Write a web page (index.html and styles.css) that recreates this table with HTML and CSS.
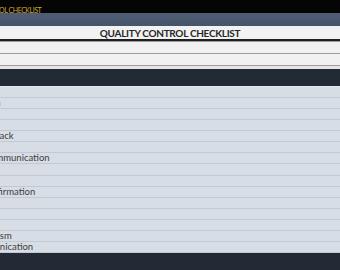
FILE: index.html
```html
<!DOCTYPE html>
<html lang="en">
<head>
    <meta charset="UTF-8">
    <meta name="viewport" content="width=device-width, initial-scale=1.0">
    <title>Quality Control Checklist</title>
    <link rel="stylesheet" href="styles.css">
</head>
<body>
    <div class="sheet">
        <div class="tab-bar">
            <span class="tab-name">QUALITY CONTROL CHECKLIST</span>
        </div>
        <div class="band"></div>

        <div class="title-row">
            <h1>QUALITY CONTROL CHECKLIST</h1>
        </div>
        <div class="info-row"></div>
        <div class="info-row"></div>
        <div class="spacer"></div>

        <div class="section-head"></div>

        <div class="items">
            <div class="item"></div>
            <div class="item">Organization</div>
            <div class="item"></div>
            <div class="item"></div>
            <div class="item">Client Feedback</div>
            <div class="item"></div>
            <div class="item">External Communication</div>
            <div class="item"></div>
            <div class="item"></div>
            <div class="item">Receipt Confirmation</div>
            <div class="item"></div>
            <div class="item"></div>
            <div class="item"></div>
            <div class="item">Professionalism</div>
            <div class="item">Oral Communication</div>
        </div>

        <div class="footer-band"></div>
    </div>
</body>
</html>
```

FILE: styles.css
```css
html, body {
    margin: 0;
    padding: 0;
    overflow: hidden;
    background: #222a35;
}
body {
    font-family: Lato, 'Open Sans', sans-serif;
    color: #3a3a3a;
}
.sheet {
    width: 450px;
    margin-left: -55px;
}

/* sheet tab strip */
.tab-bar {
    height: 13px;
    background: #050505;
    line-height: 13px;
}
.tab-name {
    display: inline-block;
    padding-left: 5px;
    font-size: 7px;
    letter-spacing: -0.45px;
    color: #d6a92c;
}
.band {
    height: 13px;
    background: linear-gradient(to bottom, #4f5e76, #46546a);
}

/* heading block */
.title-row {
    height: 13px;
    background: #f2f2f2;
    border-bottom: 2px solid #1f1f1f;
}
.title-row h1 {
    margin: 0;
    text-align: center;
    font-size: 10px;
    letter-spacing: -0.3px;
    line-height: 14px;
    font-weight: 700;
    color: #262626;
}
.info-row {
    height: 11px;
    background: #f1f1f1;
    border-top: 1px solid #9d9d9d;
}
.info-row:first-of-type {
    margin-top: 1px;
}
.spacer {
    height: 3px;
    background: #e6e6e6;
    border-top: 1px solid #9d9d9d;
}
.section-head {
    height: 17px;
    background: #222a35;
}

/* checklist rows */
.items {
    display: flex;
    flex-direction: column;
    height: 166px;
    background: #d6dde5;
    border-top: 1px solid #e3e8ee;
}
.item {
    flex: 1;
    padding-left: 2px;
    border-bottom: 1px solid #c2c9d2;
    font-size: 9.5px;
    line-height: 10px;
    display: flex;
    align-items: flex-end;
    color: #404040;
}
.footer-band {
    height: 17px;
    background: #222a35;
}
```
